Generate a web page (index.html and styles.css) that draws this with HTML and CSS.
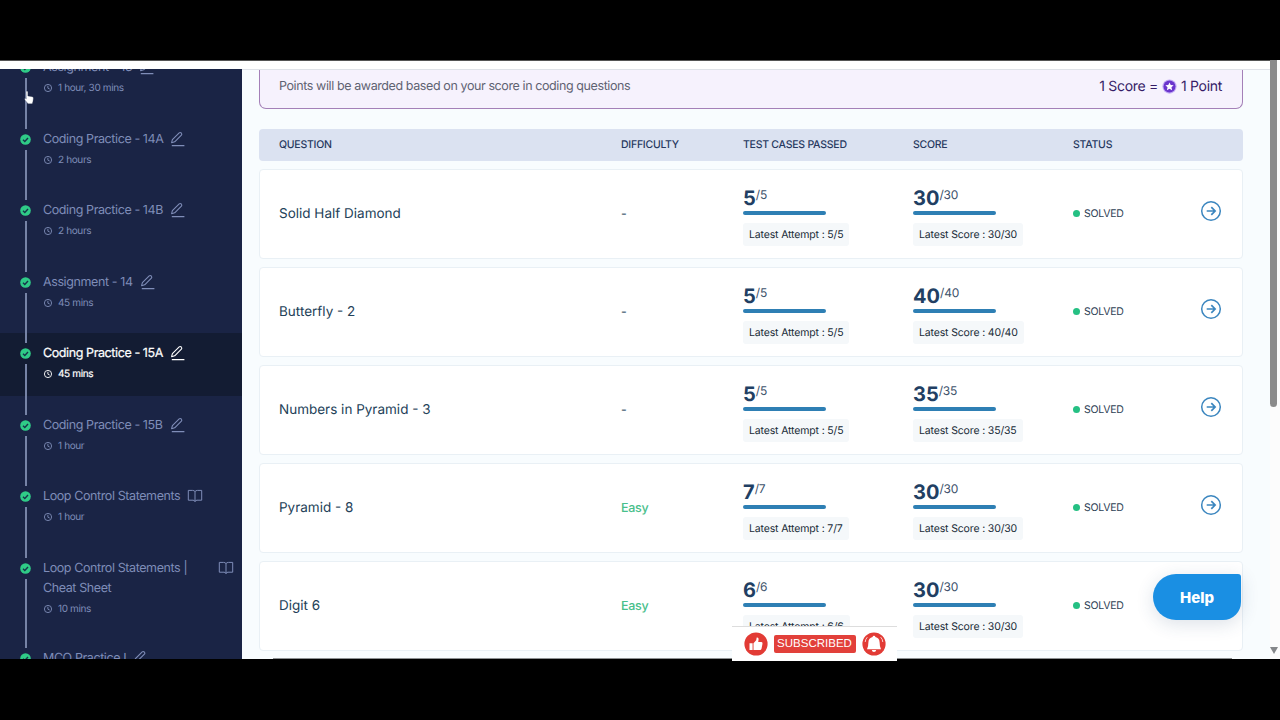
FILE: index.html
```html
<!DOCTYPE html>
<html lang="en">
<head>
    <meta charset="UTF-8">
    <meta name="viewport" content="width=device-width, initial-scale=1.0">
    <title>Coding Practice - 15A</title>
    <link rel="stylesheet" href="styles.css">
</head>
<body>
    <svg class="defs" width="0" height="0">
        <symbol id="check" viewBox="0 0 11 11">
            <circle cx="5.5" cy="5.5" r="5.3" fill="#2fcb87"/>
            <path d="M3 5.8 4.8 7.4 8 4" fill="none" stroke="#16334a" stroke-width="1.4"/>
        </symbol>
        <symbol id="clock" viewBox="0 0 10 10">
            <circle cx="5" cy="5" r="3.6" fill="none" stroke="currentColor" stroke-width=".9"/>
            <path d="M4.9 2.8V5.2L6.7 6" fill="none" stroke="currentColor" stroke-width=".9"/>
        </symbol>
        <symbol id="pen" viewBox="0 0 16 16">
            <path d="M1.6 11.7 2.4 8.7 9.2 1.9Q10.2 1 11.3 2 12.3 3.1 11.4 4.1L4.7 10.8ZM1.8 14.6H14.4" fill="none" stroke="currentColor" stroke-width="1.1" stroke-linejoin="round"/>
        </symbol>
        <symbol id="book" viewBox="0 0 16 16">
            <path d="M8 3.6Q7.2 2.4 5.5 2.4H1.3V12.2H6Q7.6 12.2 8 13.6 8.4 12.2 10 12.2H14.7V2.4H10.5Q8.8 2.4 8 3.6V13.6" fill="none" stroke="currentColor" stroke-width="1" stroke-linejoin="round"/>
        </symbol>
        <symbol id="arrow" viewBox="0 0 22 22">
            <circle cx="11" cy="11" r="9.3" fill="none" stroke="#3b86bf" stroke-width="1.5"/>
            <path d="M6.7 11H15M11.3 7.2 15.1 11 11.3 14.8" fill="none" stroke="#3b86bf" stroke-width="1.7"/>
        </symbol>
    </svg>

    <div class="screen">
        <div class="topbar"></div>
        <div class="page">
            <nav class="sidebar">
                <div class="unit">
                    <div class="rail"><svg class="check"><use href="#check"/></svg></div>
                    <div class="info">
                        <div class="title"><span>Assignment - 13</span><svg class="icon"><use href="#pen"/></svg></div>
                        <div class="time"><svg><use href="#clock"/></svg>1 hour, 30 mins</div>
                    </div>
                </div>
                <div class="unit">
                    <div class="rail"><svg class="check"><use href="#check"/></svg></div>
                    <div class="info">
                        <div class="title"><span>Coding Practice - 14A</span><svg class="icon"><use href="#pen"/></svg></div>
                        <div class="time"><svg><use href="#clock"/></svg>2 hours</div>
                    </div>
                </div>
                <div class="unit">
                    <div class="rail"><svg class="check"><use href="#check"/></svg></div>
                    <div class="info">
                        <div class="title"><span>Coding Practice - 14B</span><svg class="icon"><use href="#pen"/></svg></div>
                        <div class="time"><svg><use href="#clock"/></svg>2 hours</div>
                    </div>
                </div>
                <div class="unit">
                    <div class="rail"><svg class="check"><use href="#check"/></svg></div>
                    <div class="info">
                        <div class="title"><span>Assignment - 14</span><svg class="icon"><use href="#pen"/></svg></div>
                        <div class="time"><svg><use href="#clock"/></svg>45 mins</div>
                    </div>
                </div>
                <div class="unit active">
                    <div class="rail"><svg class="check"><use href="#check"/></svg></div>
                    <div class="info">
                        <div class="title"><span>Coding Practice - 15A</span><svg class="icon"><use href="#pen"/></svg></div>
                        <div class="time"><svg><use href="#clock"/></svg>45 mins</div>
                    </div>
                </div>
                <div class="unit">
                    <div class="rail"><svg class="check"><use href="#check"/></svg></div>
                    <div class="info">
                        <div class="title"><span>Coding Practice - 15B</span><svg class="icon"><use href="#pen"/></svg></div>
                        <div class="time"><svg><use href="#clock"/></svg>1 hour</div>
                    </div>
                </div>
                <div class="unit">
                    <div class="rail"><svg class="check"><use href="#check"/></svg></div>
                    <div class="info">
                        <div class="title"><span>Loop Control Statements</span><svg class="icon"><use href="#book"/></svg></div>
                        <div class="time"><svg><use href="#clock"/></svg>1 hour</div>
                    </div>
                </div>
                <div class="unit">
                    <div class="rail"><svg class="check"><use href="#check"/></svg></div>
                    <div class="info">
                        <div class="title wide"><span>Loop Control Statements |<br>Cheat Sheet</span><svg class="icon"><use href="#book"/></svg></div>
                        <div class="time"><svg><use href="#clock"/></svg>10 mins</div>
                    </div>
                </div>
                <div class="unit">
                    <div class="rail"><svg class="check"><use href="#check"/></svg></div>
                    <div class="info">
                        <div class="title"><span>MCQ Practice I</span><svg class="icon"><use href="#pen"/></svg></div>
                    </div>
                </div>
            </nav>

            <main class="content">
                <div class="points">
                    <span>Points will be awarded based on your score in coding questions</span>
                    <span class="rate">1 Score =
                        <svg class="coin" viewBox="0 0 16 16"><circle cx="8" cy="8" r="7.6" fill="#c3acf5"/><circle cx="8" cy="8" r="6.4" fill="#6a35cc"/><path d="M8 3.6 9.3 6.4 12.4 6.7 10.1 8.8 10.8 11.9 8 10.3 5.2 11.9 5.9 8.8 3.6 6.7 6.7 6.4Z" fill="#fff"/></svg>
                        1 Point</span>
                </div>
                <div class="row head">
                    <span>QUESTION</span><span>DIFFICULTY</span><span>TEST CASES PASSED</span><span>SCORE</span><span>STATUS</span>
                </div>
                <div class="row">
                    <span class="name">Solid Half Diamond</span>
                    <span class="level">-</span>
                    <div class="result"><div class="num"><b>5</b><sup>/5</sup></div><div class="bar"></div><span class="latest">Latest Attempt : 5/5</span></div>
                    <div class="result"><div class="num"><b>30</b><sup>/30</sup></div><div class="bar"></div><span class="latest">Latest Score : 30/30</span></div>
                    <span class="status">SOLVED</span>
                    <svg class="go"><use href="#arrow"/></svg>
                </div>
                <div class="row">
                    <span class="name">Butterfly - 2</span>
                    <span class="level">-</span>
                    <div class="result"><div class="num"><b>5</b><sup>/5</sup></div><div class="bar"></div><span class="latest">Latest Attempt : 5/5</span></div>
                    <div class="result"><div class="num"><b>40</b><sup>/40</sup></div><div class="bar"></div><span class="latest">Latest Score : 40/40</span></div>
                    <span class="status">SOLVED</span>
                    <svg class="go"><use href="#arrow"/></svg>
                </div>
                <div class="row">
                    <span class="name">Numbers in Pyramid - 3</span>
                    <span class="level">-</span>
                    <div class="result"><div class="num"><b>5</b><sup>/5</sup></div><div class="bar"></div><span class="latest">Latest Attempt : 5/5</span></div>
                    <div class="result"><div class="num"><b>35</b><sup>/35</sup></div><div class="bar"></div><span class="latest">Latest Score : 35/35</span></div>
                    <span class="status">SOLVED</span>
                    <svg class="go"><use href="#arrow"/></svg>
                </div>
                <div class="row">
                    <span class="name">Pyramid - 8</span>
                    <span class="level easy">Easy</span>
                    <div class="result"><div class="num"><b>7</b><sup>/7</sup></div><div class="bar"></div><span class="latest">Latest Attempt : 7/7</span></div>
                    <div class="result"><div class="num"><b>30</b><sup>/30</sup></div><div class="bar"></div><span class="latest">Latest Score : 30/30</span></div>
                    <span class="status">SOLVED</span>
                    <svg class="go"><use href="#arrow"/></svg>
                </div>
                <div class="row">
                    <span class="name">Digit 6</span>
                    <span class="level easy">Easy</span>
                    <div class="result"><div class="num"><b>6</b><sup>/6</sup></div><div class="bar"></div><span class="latest">Latest Attempt : 6/6</span></div>
                    <div class="result"><div class="num"><b>30</b><sup>/30</sup></div><div class="bar"></div><span class="latest">Latest Score : 30/30</span></div>
                    <span class="status">SOLVED</span>
                </div>
                <div class="hscroll"></div>
            </main>

            <div class="scrollbar">
                <div class="thumb"></div>
                <div class="down"></div>
            </div>
        </div>
    </div>

    <button class="help">Help</button>

    <div class="subscribe">
        <svg width="24" height="24" viewBox="0 0 24 24"><circle cx="12" cy="12" r="11.6" fill="#e23b35"/><path d="M5.5 11.2H8.6V18H5.5ZM9.5 11.2 12.2 8.2 12.7 5.6Q14.8 5.2 14.6 7.6L14.2 10H17.4Q18.8 10.2 18.5 11.7L17.5 16.7Q17.2 18 16 18H9.5Z" fill="#fff"/></svg>
        <span>SUBSCRIBED</span>
        <svg width="24" height="24" viewBox="0 0 24 24"><circle cx="12" cy="12" r="11.6" fill="#e23b35"/><path d="M12 3.8Q13.3 3.8 13.4 5.1 17.4 6.1 17.6 10.2 17.6 14.5 19 17.2H5Q6.4 14.5 6.4 10.2 6.6 6.1 10.6 5.1 10.7 3.8 12 3.8ZM9.8 18H14.2Q13.9 20 12 20 10.1 20 9.8 18Z" fill="#fff"/><path d="M5.3 5.2Q3.4 7.2 3.2 10M18.7 5.2Q20.6 7.2 20.8 10" fill="none" stroke="#fbd0ce" stroke-width="1"/></svg>
    </div>

    <svg class="cursor" viewBox="0 0 12 16"><path d="M2.6 1Q3.9.5 4.2 2V6.3L9 7.1Q10.4 7.5 10.2 9L9.8 12 9 14.8H4.4L1 10.6Q.2 9 1.4 8.8L2.5 9.5 2.2 2Z" fill="#fff" stroke="#26304a" stroke-width=".3"/></svg>
</body>
</html>
```
FILE: styles.css
```css
* {
    box-sizing: border-box;
}
body {
    margin: 0;
    height: 720px;
    padding-top: 60px;
    background-color: #000;
    font-family: Inter, "Liberation Sans", sans-serif;
    text-rendering: geometricPrecision;
    overflow: hidden;
}
.defs {
    position: absolute;
}
.screen {
    height: 599px;
    display: flex;
    flex-direction: column;
    overflow: hidden;
    background-color: #f8fcfe;
}
.topbar {
    height: 9px;
    flex: none;
    background-color: #fff;
    border-top: 1px solid #555;
}
.page {
    flex: 1;
    min-height: 0;
    display: flex;
}

/* sidebar */
.sidebar {
    width: 242px;
    flex: none;
    overflow: hidden;
    background-color: #1a2445;
    color: #7f8db8;
}
.unit {
    display: flex;
    min-height: 62.5px;
    margin-bottom: 9px;
}
.unit:first-child {
    margin-top: -22px;
}
.unit.active {
    background-color: #131c33;
    color: #fff;
}
.rail {
    position: relative;
    width: 43px;
    padding: 15px 0 0 20px;
    margin-bottom: -19px;
    display: flex;
    flex-direction: column;
}
.rail::after {
    content: "";
    flex: 1;
    width: 2px;
    margin: 5px 0 0 5px;
    background-color: #7683a6;
}
.check {
    width: 11px;
    height: 11px;
    flex: none;
}
.info {
    flex: 1;
    padding: 11px 0 10.5px;
}
.title {
    display: flex;
    gap: 7px;
    padding-right: 8px;
    font-size: 12.5px;
    line-height: 20px;
    letter-spacing: -0.4px;
    white-space: nowrap;
}
.title.wide {
    justify-content: space-between;
}
.icon {
    width: 16px;
    height: 16px;
    margin-top: 1px;
}
.time {
    display: flex;
    align-items: center;
    gap: 5px;
    height: 20px;
    font-size: 10px;
    letter-spacing: -0.37px;
}
.time svg {
    width: 10px;
    height: 10px;
}
.active .title,
.active .time {
    -webkit-text-stroke: 0.2px #fff;
}

/* content */
.content {
    width: 1028px;
    padding: 0 27px 0 17px;
    overflow: hidden;
    border-top: 1px solid #dfe2e8;
}
.points {
    height: 39px;
    margin-bottom: 20px;
    padding: 0 20px 6px 19px;
    display: flex;
    align-items: center;
    justify-content: space-between;
    border: 1px solid #a480b8;
    border-top: 0;
    border-radius: 0 0 7px 7px;
    background-color: #f6f2fd;
    color: #5f6272;
    font-size: 12.5px;
    letter-spacing: -0.4px;
}
.rate {
    display: flex;
    align-items: center;
    gap: 4px;
    font-size: 14px;
    letter-spacing: -0.3px;
    color: #351b66;
}
.coin {
    width: 15px;
    height: 15px;
}
.row {
    display: grid;
    grid-template-columns: 342px 122px 170px 160px 128px 22px;
    align-items: center;
    height: 90px;
    margin-bottom: 8px;
    padding-left: 19px;
    border: 1px solid #e9f0f5;
    border-radius: 4px;
    background-color: #fff;
    color: #234158;
}
.row.head {
    height: 32px;
    border: 0;
    padding: 0 0 2px 20px;
    background-color: #dbe2f1;
    color: #27395f;
    font-size: 10.5px;
    font-weight: 500;
    letter-spacing: -0.25px;
}
.name {
    font-size: 13.5px;
}
.level {
    font-size: 12.5px;
}
.easy {
    color: #49c08c;
    font-weight: 500;
    letter-spacing: -0.3px;
}
.num {
    display: flex;
    height: 24px;
    color: #213f63;
}
.num b {
    font-size: 20px;
    line-height: 23px;
    font-weight: 700;
}
.num sup {
    font-size: 12px;
    line-height: 15px;
    letter-spacing: -0.2px;
    color: #40536c;
}
.bar {
    width: 83px;
    height: 4px;
    border-radius: 2px;
    background-color: #2e7fb4;
}
.latest {
    display: inline-block;
    height: 23px;
    margin-top: 8px;
    padding: 0 6px;
    border-radius: 3px;
    background-color: #f5f8fa;
    color: #202c38;
    font-size: 10.5px;
    line-height: 23px;
    letter-spacing: -0.15px;
    white-space: nowrap;
}
.result {
    height: 76px;
    padding-top: 11px;
}
.status {
    display: flex;
    align-items: center;
    gap: 4px;
    margin-bottom: 2px;
    font-size: 10.5px;
    letter-spacing: -0.25px;
    color: #2d4155;
}
.status::before {
    content: "";
    width: 7px;
    height: 7px;
    border-radius: 50%;
    background-color: #25c083;
}
.go {
    width: 22px;
    height: 22px;
    margin: 0 0 6px -1px;
}
.hscroll {
    width: 959px;
    height: 1px;
    margin: -1px 0 0 14px;
    background-color: #8c8f91;
}
.scrollbar {
    width: 10px;
    margin-top: -9px;
    padding-right: 3px;
    display: flex;
    flex-direction: column;
    justify-content: space-between;
    align-items: center;
    background-color: #fcfcfc;
}
.thumb {
    width: 7px;
    height: 347px;
    border-radius: 0 0 4px 4px;
    background-color: #8b8b8b;
}
.down {
    margin-bottom: 5px;
    border: 4px solid transparent;
    border-top: 7px solid #85878a;
    border-bottom: 0;
}

/* overlays */
.help {
    position: absolute;
    left: 1153px;
    top: 574px;
    width: 88px;
    height: 46px;
    border: 0;
    border-radius: 23px 3px 18px 23px;
    background-color: #1a8fe3;
    box-shadow: 0 4px 18px rgba(40, 70, 110, 0.16);
    color: #fff;
    font-family: inherit;
    font-size: 15px;
    font-weight: 800;
}
.subscribe {
    position: absolute;
    left: 732px;
    top: 626px;
    width: 165px;
    height: 35px;
    display: flex;
    align-items: center;
    justify-content: center;
    gap: 6px;
    border-top: 1px solid #ddd;
    background-color: #fff;
}
.subscribe span {
    width: 82px;
    padding-top: 1px;
    border-radius: 2px;
    background-color: #e2403a;
    color: #fff;
    font-family: "Liberation Sans", Arial, sans-serif;
    font-size: 11.5px;
    line-height: 17px;
    text-align: center;
}
.cursor {
    position: absolute;
    left: 24px;
    top: 90px;
    width: 11px;
    height: 15px;
}
```
